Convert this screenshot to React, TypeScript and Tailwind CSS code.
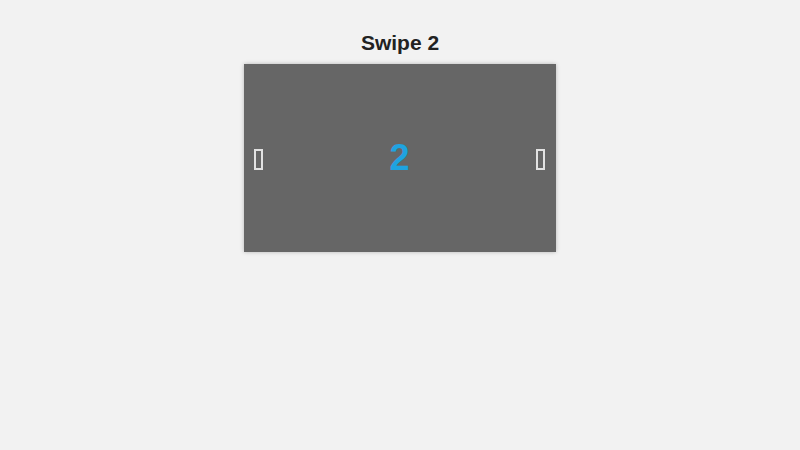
import { useState } from 'react'

const slides = ['1', '2', '3']

function ArrowBox({ onClick, label }: { onClick: () => void; label: string }) {
  return (
    <button
      type="button"
      aria-label={label}
      onClick={onClick}
      className="mt-[3px] h-[21px] w-[9px] border-2 border-[#e2e2e2]"
    />
  )
}

export default function App() {
  const [index, setIndex] = useState(1)

  return (
    <div className="min-h-[450px] w-full bg-[#f2f2f2] font-['Liberation_Sans',Arial,sans-serif]">
      <div className="flex flex-col items-center pt-[31px]">
        <h1 className="text-[21px] font-bold leading-6 text-[#222]">Swipe {index + 1}</h1>
        <div className="mt-[9px] flex h-[188px] w-[312px] items-center justify-between bg-[#666] pl-[10px] pr-[11px] shadow-[0_0_4px_rgba(0,0,0,0.25)]">
          <ArrowBox label="prev" onClick={() => setIndex((index + slides.length - 1) % slides.length)} />
          <span className="text-[36px] font-bold text-[#1fa3e0]">{slides[index]}</span>
          <ArrowBox label="next" onClick={() => setIndex((index + 1) % slides.length)} />
        </div>
      </div>
    </div>
  )
}
